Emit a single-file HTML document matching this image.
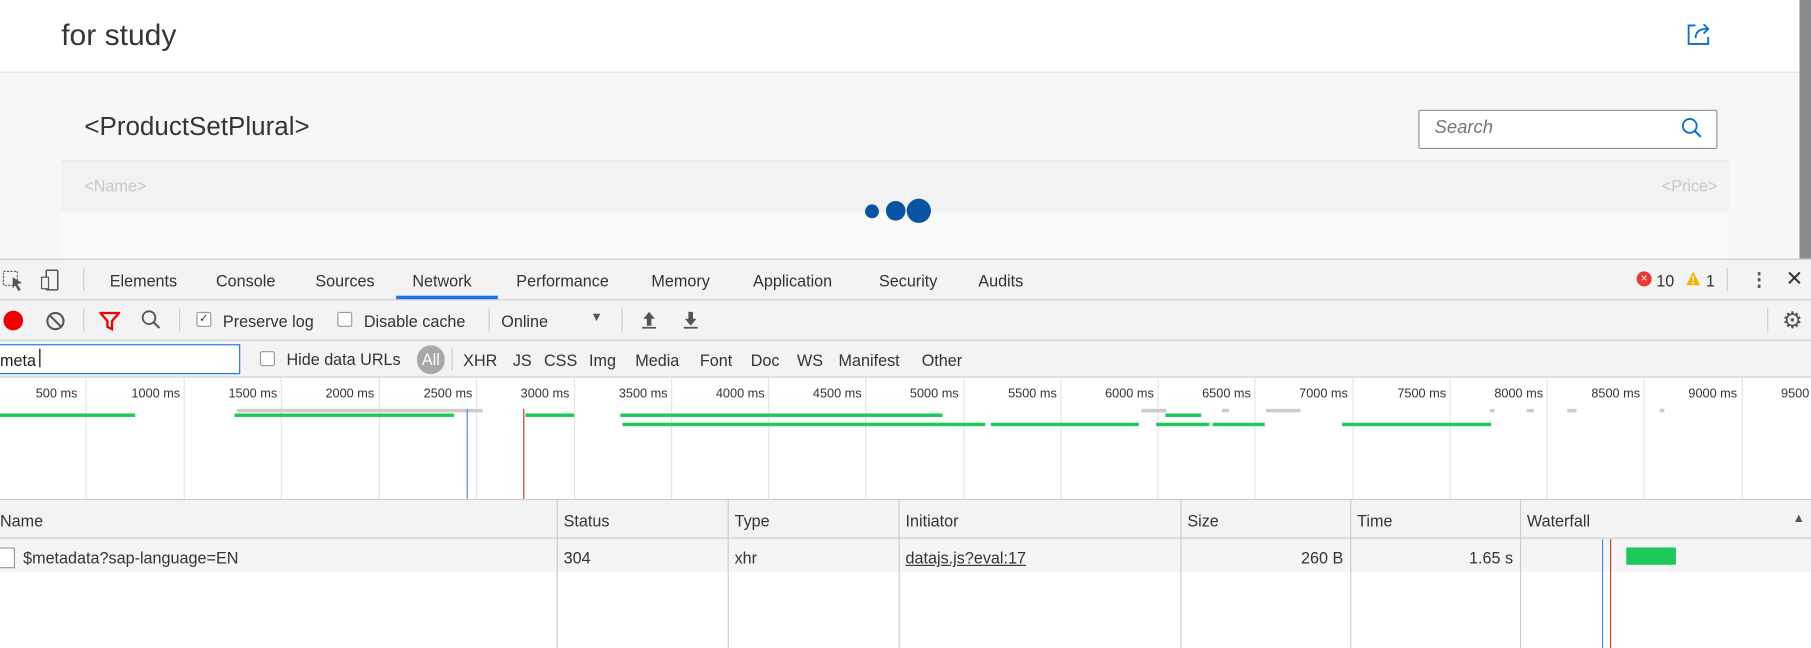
<!DOCTYPE html>
<html><head><meta charset="utf-8"><style>
html,body{margin:0;padding:0;width:1811px;height:648px;overflow:hidden;background:#fff}
#w{position:absolute;left:0;top:0;width:1568px;height:561px;transform:scale(1.155);transform-origin:0 0;font-family:"Liberation Sans",sans-serif;}
.a{position:absolute}
.t{position:absolute;font-size:14px;color:#333;white-space:nowrap}
.g{position:absolute;top:327px;height:105px;width:1px;background:#e4e4e4}
.l{position:absolute;top:335px;font-size:11px;color:#333;white-space:nowrap;text-align:right;width:68px}
.gr{position:absolute;height:3px;background:#1ec85a}
.gy{position:absolute;height:3px;background:#ccc}
.cb{position:absolute;width:11px;height:11px;border:1px solid #999;border-radius:2px;background:#fff}
.vs{position:absolute;width:1px;background:#ccc}
</style></head><body><div id="w">
<div class="a" style="left:0;top:0;width:1558px;height:62px;background:#fff;box-shadow:0 1px 2px rgba(0,0,0,.15)"></div>
<div class="t" style="left:53px;top:15px;font-size:26px;color:#32363a">for study</div>
<svg class="a" style="left:1460px;top:19px" width="22" height="22" viewBox="0 0 22 22"><path d="M8 3H2v16h17v-6" fill="none" stroke="#0a6ed1" stroke-width="1.6"/><path d="M8 14c0-6 4-8 10-8M15 2l4 4-4 4" fill="none" stroke="#0a6ed1" stroke-width="1.6"/></svg>
<div class="a" style="left:0;top:63px;width:1558px;height:161px;background:#f7f7f7"></div>
<div class="a" style="left:1558px;top:0;width:10px;height:224px;background:#8c8c8c"></div>
<div class="t" style="left:73px;top:97px;font-size:22.5px;color:#32363a">&lt;ProductSetPlural&gt;</div>
<div class="a" style="left:1228px;top:95px;width:257px;height:32px;border:1px solid #89919a;border-radius:2px;background:#fff"></div>
<div class="t" style="left:1242px;top:102px;font-size:16px;color:#74777a;font-style:italic">Search</div>
<svg class="a" style="left:1455px;top:101px" width="20" height="20" viewBox="0 0 20 20"><circle cx="8" cy="8" r="6" fill="none" stroke="#0a6ed1" stroke-width="1.6"/><path d="M12.5 12.5l5 5" stroke="#0a6ed1" stroke-width="1.8"/></svg>
<div class="a" style="left:53px;top:139px;width:1444px;height:1px;background:#e0e0e0"></div>
<div class="a" style="left:53px;top:140px;width:1444px;height:44px;background:#f2f2f2"></div>
<div class="a" style="left:53px;top:184px;width:1444px;height:40px;background:#fafafa"></div>
<div class="t" style="left:73px;top:153px;color:#c8c8c8">&lt;Name&gt;</div>
<div class="t" style="left:1426px;top:153px;color:#c8c8c8;width:61px;text-align:right">&lt;Price&gt;</div>
<div class="a" style="left:749px;top:177px;width:12px;height:12px;border-radius:50%;background:#0854a0"></div>
<div class="a" style="left:767px;top:174px;width:17px;height:17px;border-radius:50%;background:#0854a0"></div>
<div class="a" style="left:785px;top:172px;width:21px;height:21px;border-radius:50%;background:#0854a0"></div>
<div class="a" style="left:0;top:224px;width:1568px;height:103px;background:#f3f3f3;border-top:1px solid #ccc"></div>
<div class="a" style="left:0;top:259px;width:1568px;height:1px;background:#ccc"></div>
<div class="a" style="left:0;top:294px;width:1568px;height:1px;background:#ccc"></div>
<div class="a" style="left:0;top:326px;width:1568px;height:1px;background:#ccc"></div>
<svg class="a" style="left:2px;top:233px" width="60" height="20"><rect x="1" y="2" width="12" height="12" fill="none" stroke="#666" stroke-dasharray="2 1"/><path d="M9 7l8 5-4 1 3 5-2 1-3-5-2 3z" fill="#555"/><rect x="38" y="1" width="10" height="17" rx="1" fill="none" stroke="#555" stroke-width="1.3"/><rect x="34" y="7" width="6" height="10" fill="#f3f3f3" stroke="#555"/></svg>
<div class="vs" style="left:72px;top:232px;height:20px"></div>
<div class="t" style="left:95px;top:235px">Elements</div>
<div class="t" style="left:187px;top:235px">Console</div>
<div class="t" style="left:273px;top:235px">Sources</div>
<div class="t" style="left:357px;top:235px">Network</div>
<div class="a" style="left:343px;top:256px;width:88px;height:3px;background:#1a73e8"></div>
<div class="t" style="left:447px;top:235px">Performance</div>
<div class="t" style="left:564px;top:235px">Memory</div>
<div class="t" style="left:652px;top:235px">Application</div>
<div class="t" style="left:761px;top:235px">Security</div>
<div class="t" style="left:847px;top:235px">Audits</div>
<div class="a" style="left:1417px;top:235px;width:13px;height:13px;border-radius:50%;background:#e53935;color:#fff;font-size:10px;text-align:center;line-height:13px">×</div>
<div class="t" style="left:1434px;top:235px">10</div>
<svg class="a" style="left:1459px;top:234px" width="14" height="14"><path d="M7 1L13 13H1z" fill="#f4b400"/><rect x="6.3" y="5" width="1.4" height="4" fill="#fff"/><rect x="6.3" y="10" width="1.4" height="1.4" fill="#fff"/></svg>
<div class="t" style="left:1477px;top:235px">1</div>
<div class="vs" style="left:1495px;top:232px;height:20px"></div>
<div class="t" style="left:1515px;top:232px;font-size:16px;font-weight:bold;color:#555">⋮</div>
<div class="t" style="left:1546px;top:231px;font-size:18px;color:#333">✕</div>
<div class="a" style="left:3px;top:269px;width:17px;height:17px;border-radius:50%;background:#e00"></div>
<svg class="a" style="left:39px;top:269px" width="18" height="18"><circle cx="9" cy="9" r="7" fill="none" stroke="#555" stroke-width="1.8"/><path d="M4 4l10 10" stroke="#555" stroke-width="1.8"/></svg>
<div class="vs" style="left:72px;top:267px;height:20px"></div>
<svg class="a" style="left:86px;top:269px" width="18" height="18"><path d="M1 2h16l-6 7v7l-4-2V9z" fill="none" stroke="#e00" stroke-width="2"/></svg>
<svg class="a" style="left:122px;top:268px" width="18" height="18"><circle cx="7" cy="7" r="5.5" fill="none" stroke="#555" stroke-width="1.6"/><path d="M11 11l5 5" stroke="#555" stroke-width="1.8"/></svg>
<div class="vs" style="left:155px;top:267px;height:20px"></div>
<div class="cb" style="left:170px;top:270px;background:#fff;font-size:10px;line-height:11px;text-align:center;color:#333">✓</div>
<div class="t" style="left:193px;top:270px">Preserve log</div>
<div class="cb" style="left:292px;top:270px"></div>
<div class="t" style="left:315px;top:270px">Disable cache</div>
<div class="vs" style="left:423px;top:267px;height:20px"></div>
<div class="t" style="left:434px;top:270px">Online</div>
<div class="t" style="left:511px;top:269px;font-size:11px;color:#555">▼</div>
<div class="vs" style="left:538px;top:267px;height:20px"></div>
<svg class="a" style="left:555px;top:268px" width="60" height="18"><path d="M7 2l5 6H9v6H5V8H2z" fill="#555"/><rect x="1" y="15" width="12" height="1.5" fill="#555"/><path d="M43 14l5-6h-3V2h-4v6h-3z" fill="#555"/><rect x="37" y="15" width="12" height="1.5" fill="#555"/></svg>
<div class="vs" style="left:1530px;top:267px;height:20px"></div>
<div class="t" style="left:1543px;top:265px;font-size:20px;color:#555">⚙</div>
<div class="a" style="left:-2px;top:298px;width:208px;height:24px;border:1px solid #1a73e8;background:#fff"></div>
<div class="t" style="left:0px;top:304px;color:#222">meta</div>
<div class="a" style="left:34px;top:302px;width:1px;height:16px;background:#000"></div>
<div class="cb" style="left:225px;top:304px"></div>
<div class="t" style="left:248px;top:303px">Hide data URLs</div>
<div class="a" style="left:361px;top:299px;width:24px;height:25px;border-radius:12px;background:#a8a8a8;color:#fff;font-size:14px;line-height:25px;text-align:center">All</div>
<div class="vs" style="left:391px;top:301px;height:20px"></div>
<div class="t" style="left:401px;top:304px">XHR</div>
<div class="t" style="left:444px;top:304px">JS</div>
<div class="t" style="left:471px;top:304px">CSS</div>
<div class="t" style="left:510px;top:304px">Img</div>
<div class="t" style="left:550px;top:304px">Media</div>
<div class="t" style="left:606px;top:304px">Font</div>
<div class="t" style="left:650px;top:304px">Doc</div>
<div class="t" style="left:690px;top:304px">WS</div>
<div class="t" style="left:726px;top:304px">Manifest</div>
<div class="t" style="left:798px;top:304px">Other</div>
<div class="a" style="left:0;top:327px;width:1568px;height:105px;background:#fff"></div>
<div class="g" style="left:74px"></div><div class="g" style="left:159px"></div><div class="g" style="left:243px"></div><div class="g" style="left:328px"></div><div class="g" style="left:412px"></div><div class="g" style="left:497px"></div><div class="g" style="left:581px"></div><div class="g" style="left:665px"></div><div class="g" style="left:749px"></div><div class="g" style="left:834px"></div><div class="g" style="left:918px"></div><div class="g" style="left:1002px"></div><div class="g" style="left:1086px"></div><div class="g" style="left:1171px"></div><div class="g" style="left:1255px"></div><div class="g" style="left:1339px"></div><div class="g" style="left:1423px"></div><div class="g" style="left:1508px"></div>
<div class="l" style="left:-1px">500 ms</div><div class="l" style="left:88px">1000 ms</div><div class="l" style="left:172px">1500 ms</div><div class="l" style="left:256px">2000 ms</div><div class="l" style="left:341px">2500 ms</div><div class="l" style="left:425px">3000 ms</div><div class="l" style="left:510px">3500 ms</div><div class="l" style="left:594px">4000 ms</div><div class="l" style="left:678px">4500 ms</div><div class="l" style="left:762px">5000 ms</div><div class="l" style="left:847px">5500 ms</div><div class="l" style="left:931px">6000 ms</div><div class="l" style="left:1015px">6500 ms</div><div class="l" style="left:1099px">7000 ms</div><div class="l" style="left:1184px">7500 ms</div><div class="l" style="left:1268px">8000 ms</div><div class="l" style="left:1352px">8500 ms</div><div class="l" style="left:1436px">9000 ms</div><div class="l" style="left:1542px;text-align:left">9500</div>
<div class="gy" style="left:205px;top:354px;width:213px"></div>
<div class="gy" style="left:988px;top:354px;width:22px"></div>
<div class="gy" style="left:1058px;top:354px;width:6px"></div>
<div class="gy" style="left:1096px;top:354px;width:30px"></div>
<div class="gy" style="left:1290px;top:354px;width:4px"></div>
<div class="gy" style="left:1322px;top:354px;width:6px"></div>
<div class="gy" style="left:1357px;top:354px;width:8px"></div>
<div class="gy" style="left:1437px;top:354px;width:4px"></div>
<div class="gr" style="left:0;top:358px;width:117px"></div>
<div class="gr" style="left:203px;top:358px;width:190px"></div>
<div class="gr" style="left:455px;top:358px;width:42px"></div>
<div class="gr" style="left:537px;top:358px;width:279px"></div>
<div class="gr" style="left:1009px;top:358px;width:31px"></div>
<div class="gr" style="left:539px;top:366px;width:314px"></div>
<div class="gr" style="left:858px;top:366px;width:128px"></div>
<div class="gr" style="left:1001px;top:366px;width:46px"></div>
<div class="gr" style="left:1050px;top:366px;width:45px"></div>
<div class="gr" style="left:1162px;top:366px;width:129px"></div>
<div class="a" style="left:404px;top:354px;width:1px;height:78px;background:#4a8ad8"></div>
<div class="a" style="left:453px;top:354px;width:1px;height:78px;background:#c33"></div>
<div class="a" style="left:0;top:432px;width:1568px;height:35px;background:#f3f3f3;border-top:1px solid #ccc;border-bottom:2px solid #ddd;box-sizing:border-box"></div>
<div class="a" style="left:0;top:467px;width:1568px;height:28px;background:#f5f5f5"></div>
<div class="vs" style="left:482px;top:432px;height:129px"></div>
<div class="vs" style="left:630px;top:432px;height:129px"></div>
<div class="vs" style="left:778px;top:432px;height:129px"></div>
<div class="vs" style="left:1022px;top:432px;height:129px"></div>
<div class="vs" style="left:1169px;top:432px;height:129px"></div>
<div class="vs" style="left:1316px;top:432px;height:129px"></div>
<div class="t" style="left:0;top:443px">Name</div>
<div class="t" style="left:488px;top:443px">Status</div>
<div class="t" style="left:636px;top:443px">Type</div>
<div class="t" style="left:784px;top:443px">Initiator</div>
<div class="t" style="left:1028px;top:443px">Size</div>
<div class="t" style="left:1175px;top:443px">Time</div>
<div class="t" style="left:1322px;top:443px">Waterfall</div>
<div class="t" style="left:1552px;top:443px;font-size:11px;color:#555">▲</div>
<div class="a" style="left:-3px;top:474px;width:14px;height:16px;border:1px solid #999;background:#fff"></div>
<div class="t" style="left:20px;top:475px">$metadata?sap-language=EN</div>
<div class="t" style="left:488px;top:475px">304</div>
<div class="t" style="left:636px;top:475px">xhr</div>
<div class="t" style="left:784px;top:475px;text-decoration:underline">datajs.js?eval:17</div>
<div class="t" style="left:1100px;top:475px;width:63px;text-align:right">260 B</div>
<div class="t" style="left:1250px;top:475px;width:60px;text-align:right">1.65 s</div>
<div class="a" style="left:1387px;top:467px;width:1px;height:94px;background:#4a8ad8"></div>
<div class="a" style="left:1394px;top:467px;width:1px;height:94px;background:#c33"></div>
<div class="a" style="left:1408px;top:474px;width:43px;height:15px;background:#1ec85a"></div>
</div></body></html>
